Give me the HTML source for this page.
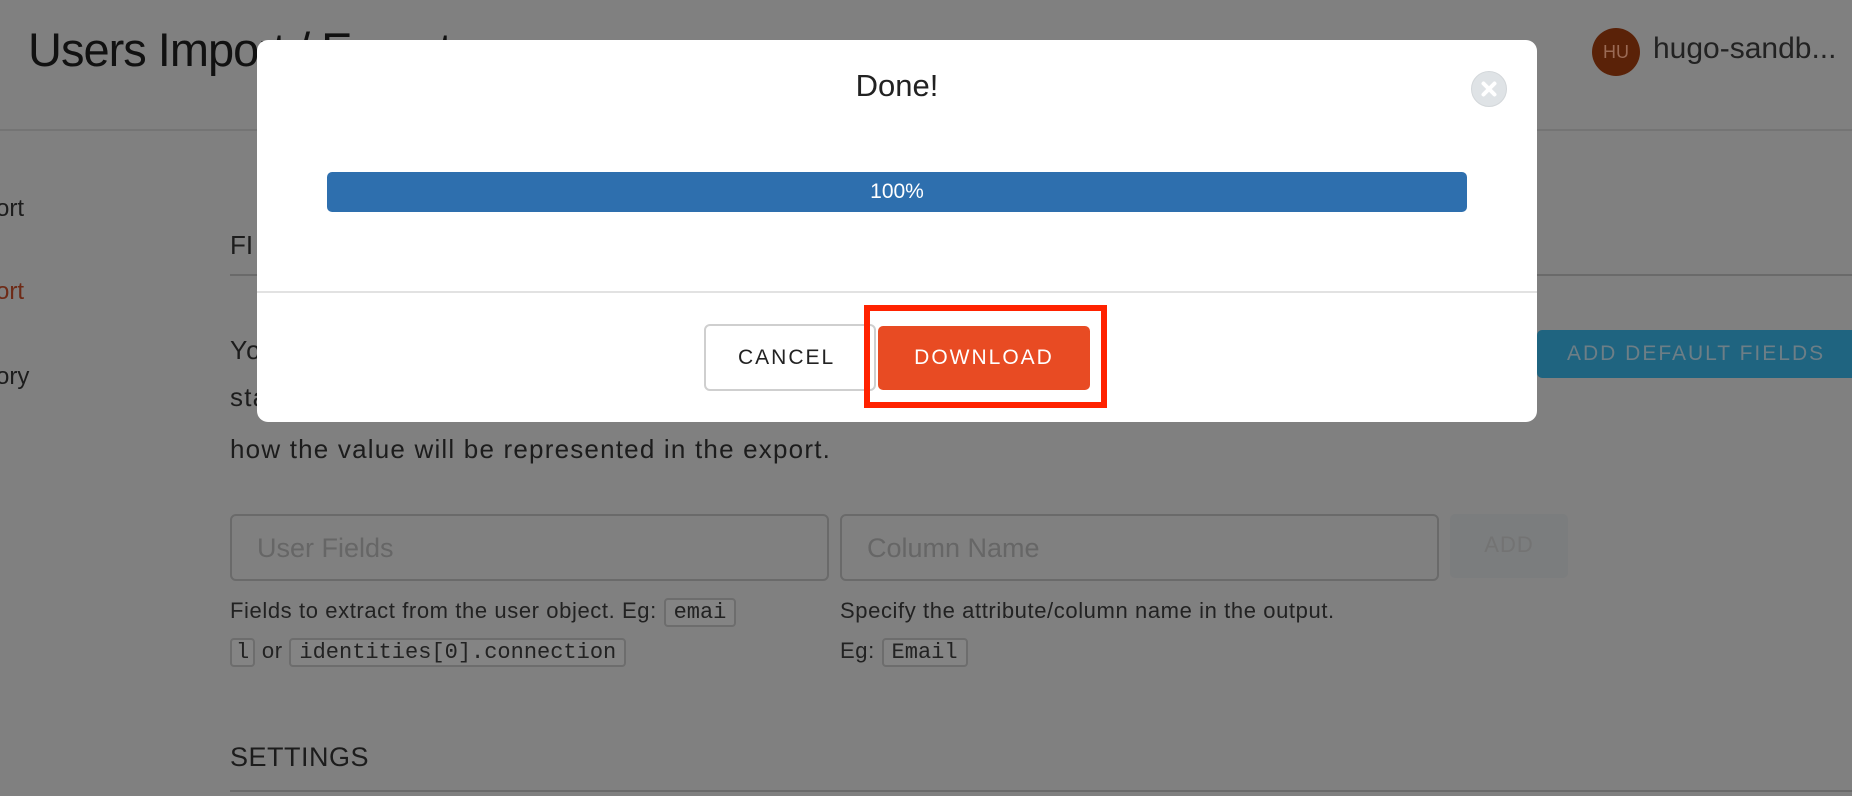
<!DOCTYPE html>
<html><head><meta charset="utf-8"><style>
*{margin:0;padding:0;box-sizing:border-box}
body{width:1852px;height:796px;overflow:hidden;background:#808080;font-family:"Liberation Sans",sans-serif;color:#1c1c1c;position:relative}
.a{position:absolute;white-space:nowrap}
.code{font-family:"Liberation Mono",monospace;font-size:22px;letter-spacing:0;border:2px solid #6d6d6d;border-radius:4px;background:#848484;padding:0 8px;color:#222}
</style></head><body>
<div class="a" style="left:28px;top:22px;font-size:47px;letter-spacing:-1px;color:#111">Users Import / Export</div>
<div class="a" style="left:0;top:129px;width:1852px;height:2px;background:#747474"></div>
<div class="a" style="left:1592px;top:28px;width:48px;height:48px;border-radius:50%;background:#5a2208;color:#9a6a55;font-size:18px;line-height:48px;text-align:center">HU</div>
<div class="a" style="left:1653px;top:32px;font-size:30px;color:#222">hugo-sandb...</div>

<div class="a" style="left:-4px;top:195px;font-size:24px">ort</div>
<div class="a" style="left:-4px;top:278px;font-size:24px;color:#6e2a16">ort</div>
<div class="a" style="left:-4px;top:363px;font-size:24px">ory</div>

<div class="a" style="left:230px;top:230px;font-size:26px">FI</div>
<div class="a" style="left:230px;top:274px;width:1622px;height:2px;background:#6a6a6a"></div>
<div class="a" style="left:230px;top:335px;font-size:26px;letter-spacing:1.2px">You</div>
<div class="a" style="left:230px;top:382px;font-size:26px;letter-spacing:1.2px">sta</div>
<div class="a" style="left:230px;top:434px;font-size:26px;letter-spacing:1.2px">how the value will be represented in the export.</div>
<div class="a" style="left:1537px;top:330px;width:330px;height:48px;background:#1f6480;border-radius:5px;color:#6d7e86;font-size:21px;letter-spacing:2px;line-height:48px;padding-left:30px">ADD DEFAULT FIELDS</div>

<div class="a" style="left:230px;top:514px;width:599px;height:67px;border:2px solid #6a6a6a;border-radius:6px;font-size:27px;color:#666;padding:17px 0 0 25px">User Fields</div>
<div class="a" style="left:840px;top:514px;width:599px;height:67px;border:2px solid #6a6a6a;border-radius:6px;font-size:27px;color:#666;padding:17px 0 0 25px">Column Name</div>
<div class="a" style="left:1450px;top:514px;width:118px;height:64px;background:#7b7d7e;border-radius:5px;font-size:22px;color:#737373;text-align:center;line-height:62px;letter-spacing:1px">ADD</div>

<div class="a" style="left:230px;top:598px;font-size:22px;letter-spacing:0.6px;color:#222">Fields to extract from the user object. Eg: <span class="code">emai</span></div>
<div class="a" style="left:230px;top:638px;font-size:22px;letter-spacing:0.6px;color:#222"><span class="code" style="padding:0 4px">l</span> or <span class="code">identities[0].connection</span></div>
<div class="a" style="left:840px;top:598px;font-size:22px;letter-spacing:0.6px;color:#222">Specify the attribute/column name in the output.</div>
<div class="a" style="left:840px;top:638px;font-size:22px;letter-spacing:0.6px;color:#222">Eg: <span class="code">Email</span></div>

<div class="a" style="left:230px;top:742px;font-size:27px;letter-spacing:0.5px">SETTINGS</div>
<div class="a" style="left:230px;top:790px;width:1622px;height:2px;background:#6a6a6a"></div>

<!-- modal -->
<div class="a" style="left:257px;top:40px;width:1280px;height:382px;background:#fff;border-radius:11px"></div>
<div class="a" style="left:257px;top:68px;width:1280px;text-align:center;font-size:31px;color:#222">Done!</div>
<div class="a" style="left:1471px;top:71px;width:36px;height:36px;border-radius:50%;background:#dfe3e6;border:1px solid #d3d7da"></div>
<svg class="a" style="left:1471px;top:71px" width="36" height="36"><path d="M12.5 12.5L23.5 23.5M23.5 12.5L12.5 23.5" stroke="#fff" stroke-width="4" stroke-linecap="round"/></svg>
<div class="a" style="left:327px;top:172px;width:1140px;height:40px;background:#2e6fae;border-radius:5px;color:#fff;font-size:21px;text-align:center;line-height:40px">100%</div>
<div class="a" style="left:257px;top:291px;width:1280px;height:2px;background:#e2e2e2"></div>
<div class="a" style="left:704px;top:324px;width:172px;height:67px;border:2px solid #cfcfcf;border-radius:6px;font-size:21px;letter-spacing:2px;color:#222;line-height:63px;padding-left:32px">CANCEL</div>
<div class="a" style="left:864px;top:305px;width:243px;height:103px;border:6px solid #ff2200"></div>
<div class="a" style="left:878px;top:326px;width:212px;height:64px;background:#e84b23;border-radius:5px;font-size:21px;letter-spacing:2px;color:#fff;text-align:center;line-height:64px">DOWNLOAD</div>
</body></html>
